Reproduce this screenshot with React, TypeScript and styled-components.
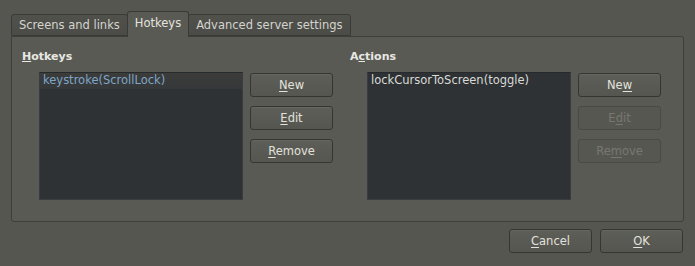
import styled, { createGlobalStyle } from "styled-components";

const Global = createGlobalStyle`
  html, body {
    margin: 0;
    padding: 0;
    background: #555550;
  }
  body {
    font-family: "DejaVu Sans", "Liberation Sans", sans-serif;
    font-size: 11.5px;
    color: #dcdcd6;
  }
`;

const Window = styled.div`
  width: 695px;
  height: 266px;
  box-sizing: border-box;
  padding: 11px 12px 0 11px;
  background: #565651;
  display: flex;
  flex-direction: column;
`;

const TabBar = styled.div`
  display: flex;
  align-items: flex-end;
  height: 25px;
`;

const Tab = styled.div<{ $active?: boolean }>`
  box-sizing: border-box;
  height: ${(p) => (p.$active ? "26px" : "22px")};
  margin-bottom: ${(p) => (p.$active ? "-1px" : "0")};
  padding: 0 7px;
  padding-bottom: ${(p) => (p.$active ? "3px" : "0")};
  display: flex;
  align-items: center;
  border: 1px solid #3a3a37;
  border-bottom: ${(p) => (p.$active ? "none" : "1px solid #3a3a37")};
  border-radius: 3px 3px 0 0;
  background: ${(p) =>
    p.$active ? "#5a5a55" : "linear-gradient(#51514c, #4b4b47)"};
  color: ${(p) => (p.$active ? "#e4e4de" : "#d4d4ce")};
  white-space: nowrap;
  position: relative;
  z-index: ${(p) => (p.$active ? 1 : 0)};
  margin-left: ${(p) => (p.$active ? "-1px" : "0")};
  margin-right: ${(p) => (p.$active ? "-1px" : "0")};
`;

const Pane = styled.div`
  box-sizing: border-box;
  width: 673px;
  height: 186px;
  border: 1px solid #3e3e3a;
  border-radius: 0 3px 3px 3px;
  background: #5a5a55;
  padding: 12px 10px 0 10px;
  display: flex;
  gap: 17px;
`;

const Group = styled.div`
  display: flex;
  flex-direction: column;
  width: 311px;
`;

const GroupTitle = styled.div`
  font-weight: bold;
  font-size: 11px;
  color: #e8e8e2;
  height: 16px;
  line-height: 16px;
  margin-bottom: 7px;
`;

const GroupBody = styled.div`
  display: flex;
  gap: 7px;
  padding-left: 17px;
`;

const List = styled.div`
  box-sizing: border-box;
  width: 206px;
  height: 128px;
  background: #2e3235;
  border: 1px solid #3a3d3f;
  border-top-color: #262a2c;
`;

const Item = styled.div<{ $selected?: boolean }>`
  height: 16px;
  line-height: 15px;
  padding-left: 3px;
  color: ${(p) => (p.$selected ? "#7ea6c9" : "#dadad6")};
  background: ${(p) =>
    p.$selected ? "linear-gradient(#3c3c3a, #35383a)" : "transparent"};
`;

const Buttons = styled.div`
  display: flex;
  flex-direction: column;
  gap: 9px;
  padding-top: 1px;
`;

const Button = styled.button<{ $disabled?: boolean }>`
  box-sizing: border-box;
  width: 83px;
  height: 24px;
  padding: 0;
  font-family: inherit;
  font-size: 11.5px;
  border-radius: 3px;
  border: 1px solid ${(p) => (p.$disabled ? "#494945" : "#353532")};
  background: ${(p) =>
    p.$disabled ? "#575752" : "linear-gradient(#5e5e59, #565651)"};
  color: ${(p) => (p.$disabled ? "#77776f" : "#e2e2dc")};
  box-shadow: ${(p) =>
    p.$disabled ? "none" : "inset 0 1px 0 rgba(255,255,255,0.05)"};
  u {
    text-underline-offset: 2px;
  }
`;

const Footer = styled.div`
  display: flex;
  justify-content: flex-end;
  gap: 8px;
  margin-top: 7px;
`;

export default function App() {
  return (
    <>
      <Global />
      <Window>
        <TabBar>
          <Tab>Screens and links</Tab>
          <Tab $active>Hotkeys</Tab>
          <Tab>Advanced server settings</Tab>
        </TabBar>
        <Pane>
          <Group>
            <GroupTitle>
              <u>H</u>otkeys
            </GroupTitle>
            <GroupBody>
              <List>
                <Item $selected>keystroke(ScrollLock)</Item>
              </List>
              <Buttons>
                <Button>
                  <u>N</u>ew
                </Button>
                <Button>
                  <u>E</u>dit
                </Button>
                <Button>
                  <u>R</u>emove
                </Button>
              </Buttons>
            </GroupBody>
          </Group>
          <Group>
            <GroupTitle>
              A<u>c</u>tions
            </GroupTitle>
            <GroupBody>
              <List>
                <Item>lockCursorToScreen(toggle)</Item>
              </List>
              <Buttons>
                <Button>
                  Ne<u>w</u>
                </Button>
                <Button $disabled>
                  E<u>d</u>it
                </Button>
                <Button $disabled>
                  Re<u>m</u>ove
                </Button>
              </Buttons>
            </GroupBody>
          </Group>
        </Pane>
        <Footer>
          <Button>
            <u>C</u>ancel
          </Button>
          <Button>
            <u>O</u>K
          </Button>
        </Footer>
      </Window>
    </>
  );
}
